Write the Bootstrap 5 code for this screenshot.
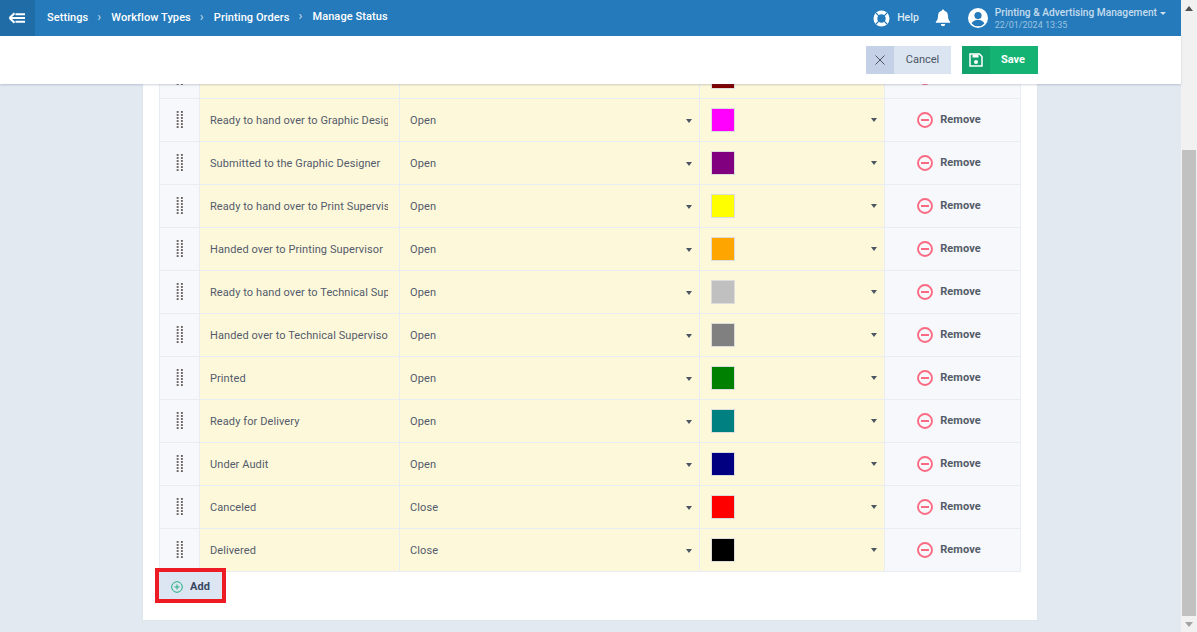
<!DOCTYPE html>
<html lang="en">
<head>
<meta charset="utf-8">
<title>Manage Status</title>
<link href="https://cdn.jsdelivr.net/npm/bootstrap@5.3.0/dist/css/bootstrap.min.css" rel="stylesheet">
<style>
html,body{height:100%;overflow:hidden}
body{font-family:Roboto,"Liberation Sans",sans-serif;font-size:11px;color:#4b5563;background:#e3e9f1}
.app-frame{height:632px}
.app-main{width:1181px;min-width:0}
.sb-track{width:16px;background:#f1f1f1}
.sb-arrow{height:16px}
.sb-up{width:0;height:0;border-left:4px solid transparent;border-right:4px solid transparent;border-bottom:5px solid #505050}
.sb-down{width:0;height:0;border-left:4px solid transparent;border-right:4px solid transparent;border-top:5px solid #a3a3a3}
.sb-space{height:134px}
.sb-thumb{background:#c1c1c1;margin:0 1px}
.top-bar{height:36px;background:#247aba;color:#fff;padding:0;flex-wrap:nowrap;flex-shrink:0;z-index:3}
.back-btn{width:35px;height:36px;background:#1f6ca6;padding-right:2px}
.crumbs{margin:1px 0 0 12px;font-size:11px;font-weight:500;letter-spacing:.08px;--bs-breadcrumb-margin-bottom:0}
.crumbs .breadcrumb-item{color:#fff}
.crumbs .breadcrumb-item.active{margin-top:-1px}
.crumbs .breadcrumb-item+.breadcrumb-item{padding-left:9px}
.crumbs .breadcrumb-item+.breadcrumb-item::before{color:#b9d3e8;content:"›";padding-right:10px;font-size:13px;line-height:1}
.help-text{font-size:10.5px;font-weight:500;color:#dbe9f4;margin-left:7px}
.bell-icon{margin-left:16px}
.user-icon{margin-left:17px}
.user-block{margin-left:7px;margin-right:15px;padding-top:2px}
.user-gap{gap:3px}
.user-name{font-size:10.2px;font-weight:500;color:#c5dcee;line-height:12px}
.user-date{font-size:9px;color:#9cc3e0;line-height:12px}
.mini-caret{width:0;height:0;border-left:3px solid transparent;border-right:3px solid transparent;border-top:3px solid #cfe1f0}
.tool-bar{height:48px;background:#fff;box-shadow:0 1px 2px rgba(60,80,110,.25);z-index:2;padding:0 143px 0 0;flex-shrink:0}
.act-btn{height:28px;padding:0;border:0;border-radius:0;font-size:11px;line-height:28px}
.act-icon{width:28px;height:28px}
.cancel-btn{background:#dbe5f1;color:#4b5563;width:85px}
.cancel-btn .act-icon{background:#c5d1e6}
.save-btn{background:#14b373;color:#fff;font-weight:700;width:76px;margin-left:11px}
.save-btn .act-icon{background:#12a26c}
.save-btn .save-label{padding-right:2px}
.page-scroll{overflow:hidden;padding:0 143px 11px 142px}
.sheet{background:#fff;padding:0 16px 17px;border:solid #dfe5ed;border-width:0 1px 1px;flex-shrink:0}
.status-table{width:862px;table-layout:fixed;margin:0;border-color:#e8ecf3;--bs-table-bg:transparent}
.status-table td{height:43px;padding:0;vertical-align:middle;border:1px solid #e8ecf3;color:#525b6b}
.status-table td.cell-drag{width:40px;background:#f6f8fb}
.status-table td.cell-name{width:200px;background:#fef8da}
.status-table td.cell-type{width:300px;background:#fef8da}
.status-table td.cell-color{width:185px;background:#fef8da}
.status-table td.cell-act{background:#f6f8fb}
.drag-icon{display:block;margin:-2px auto 0}
.name-box{margin:0 11px 0 10px;padding-top:3px;overflow:hidden;white-space:nowrap;font-size:11px;letter-spacing:.09px}
.pick-box{padding:1px 7px 0 10px;font-size:11px;letter-spacing:.12px}
.pick-box span:not(.pick-caret){margin-top:2px}
.swatch-box{padding-left:11px;padding-right:7px}
.pick-caret{width:0;height:0;border-left:3.5px solid transparent;border-right:3.5px solid transparent;border-top:4px solid #4b5563}
.swatch{width:24px;height:24px;border:1px solid #dcdcdc}
.remove-link{font-size:11px;font-weight:700;color:#545c69;gap:7px;padding-right:7px;letter-spacing:.1px}
.add-wrap{border:4px solid #ed1c24;width:71px;height:35px;margin:-4px 0 0 -4px;padding-top:2px;background:#dce6f2;color:#3a4763;font-weight:700;font-size:11px;gap:7px}
.add-wrap span{padding-top:1px}
</style>
</head>
<body>
<svg width="0" height="0" class="position-absolute">
<symbol id="i-drag" viewBox="0 0 8 18"><g fill="#6a625e"><rect x="0.5" y="0" width="2" height="2"/><rect x="5" y="0" width="2" height="2"/><rect x="0.5" y="3.2" width="2" height="2"/><rect x="5" y="3.2" width="2" height="2"/><rect x="0.5" y="6.4" width="2" height="2"/><rect x="5" y="6.4" width="2" height="2"/><rect x="0.5" y="9.6" width="2" height="2"/><rect x="5" y="9.6" width="2" height="2"/><rect x="0.5" y="12.8" width="2" height="2"/><rect x="5" y="12.8" width="2" height="2"/><rect x="0.5" y="16" width="2" height="2"/><rect x="5" y="16" width="2" height="2"/></g></symbol>
<symbol id="i-minus" viewBox="0 0 16 16"><circle cx="8" cy="8" r="7" fill="none" stroke="#fb6a82" stroke-width="1.9"/><rect x="4" y="7" width="8" height="2" fill="#fb6a82"/></symbol>
</svg>
<div class="app-frame d-flex">
<div class="app-main d-flex flex-column">
<nav class="navbar top-bar align-items-center justify-content-between">
<div class="d-flex align-items-center">
<a class="back-btn d-flex align-items-center justify-content-center" href="#" aria-label="Back"><svg width="17" height="12" viewBox="0 0 17 12"><path d="M1.500 6 L6.500 1.200 M1.500 6 L6.500 10.800 M1.500 6 H17 M7.500 2.200 H17 M7.500 9.800 H17" stroke="#fff" stroke-width="2" fill="none"/></svg></a>
<ol class="breadcrumb crumbs">
<li class="breadcrumb-item">Settings</li>
<li class="breadcrumb-item">Workflow Types</li>
<li class="breadcrumb-item">Printing Orders</li>
<li class="breadcrumb-item active">Manage Status</li>
</ol>
</div>
<div class="d-flex align-items-center">
<svg width="17" height="17" viewBox="0 0 18 18"><circle cx="9" cy="9" r="6.500" fill="none" stroke="#fff" stroke-width="4"/><g stroke="#247aba" stroke-width="1.200"><path d="M3.200 3.200 L6.400 6.400 M14.800 3.200 L11.600 6.400 M3.200 14.800 L6.400 11.600 M14.800 14.800 L11.600 11.600"/></g></svg>
<span class="help-text">Help</span>
<svg class="bell-icon" width="16" height="18" viewBox="0 0 16 18"><path d="M8 0.500c.8 0 1.300.6 1.300 1.300 2.500.6 3.700 2.600 3.700 5.200 0 3 .8 4.400 2.200 5.800v1H.8v-1C2.200 11.400 3 10 3 7c0-2.600 1.200-4.600 3.700-5.200C6.700 1.100 7.200.5 8 .5zM5.800 15h4.400a2.200 2.200 0 0 1-4.400 0z" fill="#fff"/></svg>
<svg class="user-icon" width="20" height="20" viewBox="0 0 20 20"><circle cx="10" cy="10" r="10" fill="#fff"/><circle cx="10" cy="7.500" r="3.600" fill="#247aba"/><path d="M3.600 15.500c1.200-2.600 3.800-3.700 6.400-3.700s5.200 1.100 6.400 3.700A8.300 8.300 0 0 1 10 18.300a8.300 8.300 0 0 1-6.400-2.800z" fill="#247aba"/></svg>
<div class="user-block">
<div class="d-flex align-items-center user-gap"><span class="user-name">Printing &amp; Advertising Management</span><span class="mini-caret"></span></div>
<div class="user-date">22/01/2024 13:35</div>
</div>
</div>
</nav>
<div class="tool-bar d-flex align-items-center justify-content-end">
<button class="btn act-btn cancel-btn d-flex" type="button"><span class="act-icon d-flex align-items-center justify-content-center"><svg width="10" height="10" viewBox="0 0 10 10"><path d="M.5.5l9 9M9.500.5l-9 9" stroke="#4b5563" stroke-width="1"/></svg></span><span class="flex-grow-1 text-center">Cancel</span></button>
<button class="btn act-btn save-btn d-flex" type="button"><span class="act-icon d-flex align-items-center justify-content-center"><svg width="14" height="14" viewBox="0 0 14 14"><path d="M1 1h9.500L13 3.500V13H1z" fill="none" stroke="#fff" stroke-width="1.500"/><rect x="3.500" y="1.500" width="6" height="3" fill="#fff"/><circle cx="7" cy="9" r="2" fill="#fff"/></svg></span><span class="save-label flex-grow-1 text-center">Save</span></button>
</div>
<div class="page-scroll flex-grow-1 d-flex flex-column justify-content-end">
<div class="sheet">
<table class="table table-bordered status-table">
<tbody>
<tr><td class="cell-drag"><svg class="drag-icon" width="8" height="17"><use href="#i-drag"/></svg></td><td class="cell-name"></td><td class="cell-type"><div class="pick-box d-flex align-items-center justify-content-end"><span class="pick-caret"></span></div></td><td class="cell-color"><div class="swatch-box d-flex align-items-center justify-content-between"><span class="swatch d-block" style="background:#800000"></span><span class="pick-caret"></span></div></td><td class="cell-act"><div class="remove-link d-flex align-items-center justify-content-center"><svg width="16" height="16"><use href="#i-minus"/></svg><span class="invisible">Remove</span></div></td></tr>
<tr><td class="cell-drag"><svg class="drag-icon" width="8" height="17"><use href="#i-drag"/></svg></td><td class="cell-name"><div class="name-box">Ready to hand over to Graphic Designer</div></td><td class="cell-type"><div class="pick-box d-flex align-items-center justify-content-between"><span>Open</span><span class="pick-caret"></span></div></td><td class="cell-color"><div class="swatch-box d-flex align-items-center justify-content-between"><span class="swatch d-block" style="background:#ff00ff"></span><span class="pick-caret"></span></div></td><td class="cell-act"><div class="remove-link d-flex align-items-center justify-content-center"><svg width="16" height="16"><use href="#i-minus"/></svg><span>Remove</span></div></td></tr>
<tr><td class="cell-drag"><svg class="drag-icon" width="8" height="17"><use href="#i-drag"/></svg></td><td class="cell-name"><div class="name-box">Submitted to the Graphic Designer</div></td><td class="cell-type"><div class="pick-box d-flex align-items-center justify-content-between"><span>Open</span><span class="pick-caret"></span></div></td><td class="cell-color"><div class="swatch-box d-flex align-items-center justify-content-between"><span class="swatch d-block" style="background:#800080"></span><span class="pick-caret"></span></div></td><td class="cell-act"><div class="remove-link d-flex align-items-center justify-content-center"><svg width="16" height="16"><use href="#i-minus"/></svg><span>Remove</span></div></td></tr>
<tr><td class="cell-drag"><svg class="drag-icon" width="8" height="17"><use href="#i-drag"/></svg></td><td class="cell-name"><div class="name-box">Ready to hand over to Print Supervisor</div></td><td class="cell-type"><div class="pick-box d-flex align-items-center justify-content-between"><span>Open</span><span class="pick-caret"></span></div></td><td class="cell-color"><div class="swatch-box d-flex align-items-center justify-content-between"><span class="swatch d-block" style="background:#ffff00"></span><span class="pick-caret"></span></div></td><td class="cell-act"><div class="remove-link d-flex align-items-center justify-content-center"><svg width="16" height="16"><use href="#i-minus"/></svg><span>Remove</span></div></td></tr>
<tr><td class="cell-drag"><svg class="drag-icon" width="8" height="17"><use href="#i-drag"/></svg></td><td class="cell-name"><div class="name-box">Handed over to Printing Supervisor</div></td><td class="cell-type"><div class="pick-box d-flex align-items-center justify-content-between"><span>Open</span><span class="pick-caret"></span></div></td><td class="cell-color"><div class="swatch-box d-flex align-items-center justify-content-between"><span class="swatch d-block" style="background:#ffa500"></span><span class="pick-caret"></span></div></td><td class="cell-act"><div class="remove-link d-flex align-items-center justify-content-center"><svg width="16" height="16"><use href="#i-minus"/></svg><span>Remove</span></div></td></tr>
<tr><td class="cell-drag"><svg class="drag-icon" width="8" height="17"><use href="#i-drag"/></svg></td><td class="cell-name"><div class="name-box">Ready to hand over to Technical Supervisor</div></td><td class="cell-type"><div class="pick-box d-flex align-items-center justify-content-between"><span>Open</span><span class="pick-caret"></span></div></td><td class="cell-color"><div class="swatch-box d-flex align-items-center justify-content-between"><span class="swatch d-block" style="background:#c0c0c0"></span><span class="pick-caret"></span></div></td><td class="cell-act"><div class="remove-link d-flex align-items-center justify-content-center"><svg width="16" height="16"><use href="#i-minus"/></svg><span>Remove</span></div></td></tr>
<tr><td class="cell-drag"><svg class="drag-icon" width="8" height="17"><use href="#i-drag"/></svg></td><td class="cell-name"><div class="name-box">Handed over to Technical Supervisor</div></td><td class="cell-type"><div class="pick-box d-flex align-items-center justify-content-between"><span>Open</span><span class="pick-caret"></span></div></td><td class="cell-color"><div class="swatch-box d-flex align-items-center justify-content-between"><span class="swatch d-block" style="background:#808080"></span><span class="pick-caret"></span></div></td><td class="cell-act"><div class="remove-link d-flex align-items-center justify-content-center"><svg width="16" height="16"><use href="#i-minus"/></svg><span>Remove</span></div></td></tr>
<tr><td class="cell-drag"><svg class="drag-icon" width="8" height="17"><use href="#i-drag"/></svg></td><td class="cell-name"><div class="name-box">Printed</div></td><td class="cell-type"><div class="pick-box d-flex align-items-center justify-content-between"><span>Open</span><span class="pick-caret"></span></div></td><td class="cell-color"><div class="swatch-box d-flex align-items-center justify-content-between"><span class="swatch d-block" style="background:#008000"></span><span class="pick-caret"></span></div></td><td class="cell-act"><div class="remove-link d-flex align-items-center justify-content-center"><svg width="16" height="16"><use href="#i-minus"/></svg><span>Remove</span></div></td></tr>
<tr><td class="cell-drag"><svg class="drag-icon" width="8" height="17"><use href="#i-drag"/></svg></td><td class="cell-name"><div class="name-box">Ready for Delivery</div></td><td class="cell-type"><div class="pick-box d-flex align-items-center justify-content-between"><span>Open</span><span class="pick-caret"></span></div></td><td class="cell-color"><div class="swatch-box d-flex align-items-center justify-content-between"><span class="swatch d-block" style="background:#008080"></span><span class="pick-caret"></span></div></td><td class="cell-act"><div class="remove-link d-flex align-items-center justify-content-center"><svg width="16" height="16"><use href="#i-minus"/></svg><span>Remove</span></div></td></tr>
<tr><td class="cell-drag"><svg class="drag-icon" width="8" height="17"><use href="#i-drag"/></svg></td><td class="cell-name"><div class="name-box">Under Audit</div></td><td class="cell-type"><div class="pick-box d-flex align-items-center justify-content-between"><span>Open</span><span class="pick-caret"></span></div></td><td class="cell-color"><div class="swatch-box d-flex align-items-center justify-content-between"><span class="swatch d-block" style="background:#000080"></span><span class="pick-caret"></span></div></td><td class="cell-act"><div class="remove-link d-flex align-items-center justify-content-center"><svg width="16" height="16"><use href="#i-minus"/></svg><span>Remove</span></div></td></tr>
<tr><td class="cell-drag"><svg class="drag-icon" width="8" height="17"><use href="#i-drag"/></svg></td><td class="cell-name"><div class="name-box">Canceled</div></td><td class="cell-type"><div class="pick-box d-flex align-items-center justify-content-between"><span>Close</span><span class="pick-caret"></span></div></td><td class="cell-color"><div class="swatch-box d-flex align-items-center justify-content-between"><span class="swatch d-block" style="background:#ff0000"></span><span class="pick-caret"></span></div></td><td class="cell-act"><div class="remove-link d-flex align-items-center justify-content-center"><svg width="16" height="16"><use href="#i-minus"/></svg><span>Remove</span></div></td></tr>
<tr><td class="cell-drag"><svg class="drag-icon" width="8" height="17"><use href="#i-drag"/></svg></td><td class="cell-name"><div class="name-box">Delivered</div></td><td class="cell-type"><div class="pick-box d-flex align-items-center justify-content-between"><span>Close</span><span class="pick-caret"></span></div></td><td class="cell-color"><div class="swatch-box d-flex align-items-center justify-content-between"><span class="swatch d-block" style="background:#000000"></span><span class="pick-caret"></span></div></td><td class="cell-act"><div class="remove-link d-flex align-items-center justify-content-center"><svg width="16" height="16"><use href="#i-minus"/></svg><span>Remove</span></div></td></tr>
</tbody>
</table>
<div class="add-wrap d-flex align-items-center justify-content-center"><svg width="12" height="12" viewBox="0 0 12 12"><circle cx="6" cy="6" r="5.300" fill="none" stroke="#22b07d" stroke-width="1"/><path d="M3.500 6h5M6 3.500v5" stroke="#22b07d" stroke-width="1"/></svg><span>Add</span></div>
</div>
</div>
</div>
<div class="sb-track d-flex flex-column">
<div class="sb-arrow d-flex align-items-center justify-content-center"><span class="sb-up"></span></div>
<div class="sb-space"></div>
<div class="sb-thumb flex-grow-1"></div>
<div class="sb-arrow d-flex align-items-center justify-content-center"><span class="sb-down"></span></div>
</div>
</div>
</body>
</html>
